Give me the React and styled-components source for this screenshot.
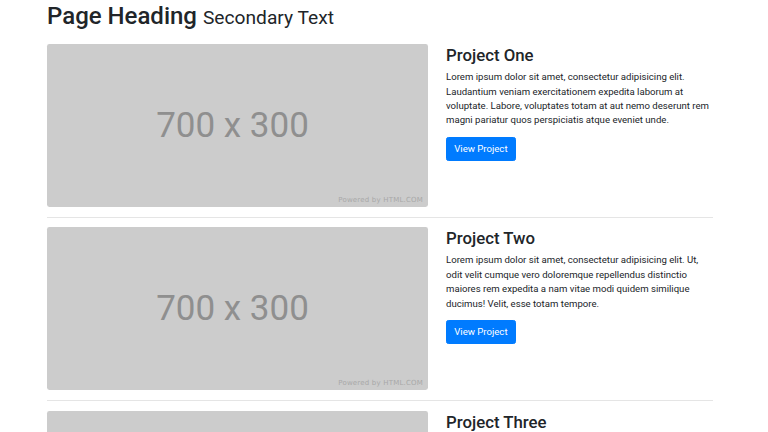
import styled, { createGlobalStyle } from "styled-components";

const GlobalStyle = createGlobalStyle`
  body {
    margin: 0;
    background: #ffffff;
    color: #212529;
    font-family: Roboto, "Liberation Sans", Arial, sans-serif;
    font-size: 9.6px;
    line-height: 1.5;
  }
  * { box-sizing: border-box; }
`;

const projects = [
  {
    title: "Project One",
    text: "Lorem ipsum dolor sit amet, consectetur adipisicing elit. Laudantium veniam exercitationem expedita laborum at voluptate. Labore, voluptates totam at aut nemo deserunt rem magni pariatur quos perspiciatis atque eveniet unde.",
  },
  {
    title: "Project Two",
    text: "Lorem ipsum dolor sit amet, consectetur adipisicing elit. Ut, odit velit cumque vero doloremque repellendus distinctio maiores rem expedita a nam vitae modi quidem similique ducimus! Velit, esse totam tempore.",
  },
  {
    title: "Project Three",
    text: "Lorem ipsum dolor sit amet, consectetur adipisicing elit. Omnis, temporibus, dolores, at, praesentium ut unde repudiandae voluptatum sit ab debitis suscipit fugiat natus velit excepturi amet commodi deleniti alias possimus!",
  },
];

function App() {
  return (
    <>
      <GlobalStyle />
      <Container>
        <PageTitle>
          Page Heading <small>Secondary Text</small>
        </PageTitle>
        {projects.map((p, i) => (
          <div key={p.title}>
            {i > 0 && <Divider />}
            <Row>
              <ImageCol>
                <Placeholder>
                  <span>700 x 300</span>
                  <Powered>Powered by HTML.COM</Powered>
                </Placeholder>
              </ImageCol>
              <TextCol>
                <ProjectTitle>{p.title}</ProjectTitle>
                <Text>{p.text}</Text>
                <Button href="#">View Project</Button>
              </TextCol>
            </Row>
          </div>
        ))}
      </Container>
    </>
  );
}

const Container = styled.div`
  width: 666px;
  margin-left: 47px;
  padding-top: 1.5px;
`;

const PageTitle = styled.h1`
  margin: 0 0 13.9px;
  font-size: 24px;
  font-weight: 500;
  line-height: 1.2;
  color: #212529;

  small {
    font-size: 80%;
    font-weight: 400;
  }
`;

const Row = styled.div`
  display: flex;
  margin: 0 -9px;
`;

const ImageCol = styled.div`
  flex: 0 0 399px;
  padding: 0 9px;
`;

const TextCol = styled.div`
  flex: 0 0 285px;
  padding: 1px 9px 0;
`;

const Placeholder = styled.div`
  position: relative;
  height: 163px;
  padding-right: 10px;
  border-radius: 2.4px;
  background: #cccccc;
  display: flex;
  align-items: center;
  justify-content: center;
  color: #8f8f8f;
  font-family: Roboto, "Liberation Sans", Arial, sans-serif;
  font-size: 35px;
  line-height: 1;
`;

const Powered = styled.span`
  position: absolute;
  right: 5px;
  bottom: 3px;
  font-family: "DejaVu Sans", Verdana, sans-serif;
  font-size: 7px;
  letter-spacing: 0.2px;
  color: #a8a8a8;
`;

const ProjectTitle = styled.h3`
  margin: 0 0 4.8px;
  font-size: 16.8px;
  font-weight: 500;
  line-height: 1.2;
`;

const Text = styled.p`
  margin: 0 0 9.6px;
`;

const Button = styled.a`
  display: inline-block;
  padding: 3.6px 7.2px;
  border: 0.6px solid #007bff;
  border-radius: 2.4px;
  background: #007bff;
  color: #ffffff;
  font-size: 9.6px;
  line-height: 1.5;
  text-decoration: none;
`;

const Divider = styled.hr`
  margin: 9.6px 0;
  border: 0;
  border-top: 1px solid rgba(0, 0, 0, 0.1);
`;

export default App;
